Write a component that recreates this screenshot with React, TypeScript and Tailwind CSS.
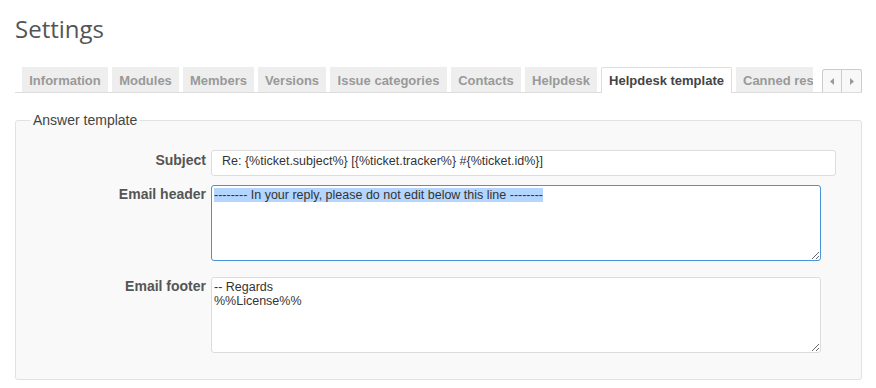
import React from "react";

const tabs: { label: string; w: string }[] = [
  { label: "Information", w: "w-[86px]" },
  { label: "Modules", w: "w-[67px]" },
  { label: "Members", w: "w-[71px]" },
  { label: "Versions", w: "w-[68px]" },
  { label: "Issue categories", w: "w-[117px]" },
  { label: "Contacts", w: "w-[70px]" },
  { label: "Helpdesk", w: "w-[72px]" },
];

function Arrow({ dir }: { dir: "left" | "right" }) {
  return (
    <svg width="4" height="7" viewBox="0 0 4 7" className="block">
      {dir === "left" ? (
        <polygon points="4,0 4,7 0,3.5" fill="#9a9a9a" />
      ) : (
        <polygon points="0,0 0,7 4,3.5" fill="#9a9a9a" />
      )}
    </svg>
  );
}

export default function App() {
  return (
    <div className="min-h-[388px] bg-white pl-[15px] pr-[14px] pt-[14px] font-['Liberation_Sans',Arial,Helvetica,sans-serif]">
      <h2 className="font-['Open_Sans',sans-serif] text-[24px] leading-[29px] text-[#555] font-normal">
        Settings
      </h2>

      {/* Tabs */}
      <div className="mt-[24px] flex h-[26px]">
        <div className="h-[26px] min-w-0 flex-1 overflow-hidden bg-[linear-gradient(to_top,#dddddd_1px,transparent_1px)]">
          <div className="flex items-start gap-[4px] whitespace-nowrap pl-[7px]">
            {tabs.map((t) => (
              <div
                key={t.label}
                className={`${t.w} h-[25px] shrink-0 bg-[#eeeeee] pt-[5px] text-center text-[13px] font-bold leading-[18px] text-[#999]`}
              >
                {t.label}
              </div>
            ))}
            <div className="h-[26px] w-[131px] shrink-0 rounded-t-[2px] border border-b-0 border-[#dddddd] bg-white pt-[4px] text-center text-[13px] font-bold leading-[18px] text-[#444]">
              Helpdesk template
            </div>
            <div className="h-[25px] shrink-0 bg-[#eeeeee] px-[7px] pt-[5px] text-[13px] font-bold leading-[18px] text-[#999]">
              Canned responses
            </div>
          </div>
        </div>
        <div className="flex h-[26px] w-[49px] shrink-0 items-end border-b border-[#dddddd] bg-white pl-[9px]">
          <div className="flex h-[23px] w-[20px] items-center justify-center rounded-tl-[3px] border border-b-0 border-[#cccccc] bg-[#f8f8f8]">
            <Arrow dir="left" />
          </div>
          <div className="flex h-[23px] w-[20px] items-center justify-center rounded-tr-[3px] border border-b-0 border-l-0 border-[#cccccc] bg-[#f8f8f8]">
            <Arrow dir="right" />
          </div>
        </div>
      </div>

      {/* Fieldset */}
      <fieldset className="mt-[19px] rounded-[3px] border border-[#e2e2e2] bg-[#f9f9f9] pb-[26px]">
        <legend className="ml-[14px] px-[3px] text-[14px] leading-[16px] text-[#444]">
          Answer template
        </legend>

        <div className="mt-[22px] flex">
          <label className="w-[190px] shrink-0 pt-[2px] text-right text-[14px] font-bold leading-[17px] text-[#555]">
            Subject
          </label>
          <input
            readOnly
            value="Re: {%ticket.subject%} [{%ticket.tracker%} #{%ticket.id%}]"
            className="ml-[5px] h-[26px] w-[625px] rounded-[3px] border border-[#dddddd] bg-white pb-[4px] pl-[10px] text-[12.5px] text-[#333] outline-none"
          />
        </div>

        <div className="mt-[9px] flex">
          <label className="w-[190px] shrink-0 pt-[1px] text-right text-[14px] font-bold leading-[17px] text-[#555]">
            Email header
          </label>
          <div className="ml-[5px] h-[76px] w-[610px] resize-y overflow-auto rounded-[3px] border border-[#4a94d6] bg-white px-[2px] pt-[1.5px] text-[12.5px] leading-[14.5px] text-[#333]">
            <span className="bg-[#b4d5fd]">
              -------- In your reply, please do not edit below this line --------
            </span>
          </div>
        </div>

        <div className="mt-[16px] flex">
          <label className="w-[190px] shrink-0 pt-[1px] text-right text-[14px] font-bold leading-[17px] text-[#555]">
            Email footer
          </label>
          <textarea
            readOnly
            defaultValue={"-- Regards\n%%License%%"}
            className="ml-[5px] h-[76px] w-[610px] rounded-[3px] border border-[#dcdcdc] bg-white px-[2px] pt-[1.5px] text-[12.5px] leading-[14.5px] text-[#333] outline-none"
          />
        </div>
      </fieldset>
    </div>
  );
}
